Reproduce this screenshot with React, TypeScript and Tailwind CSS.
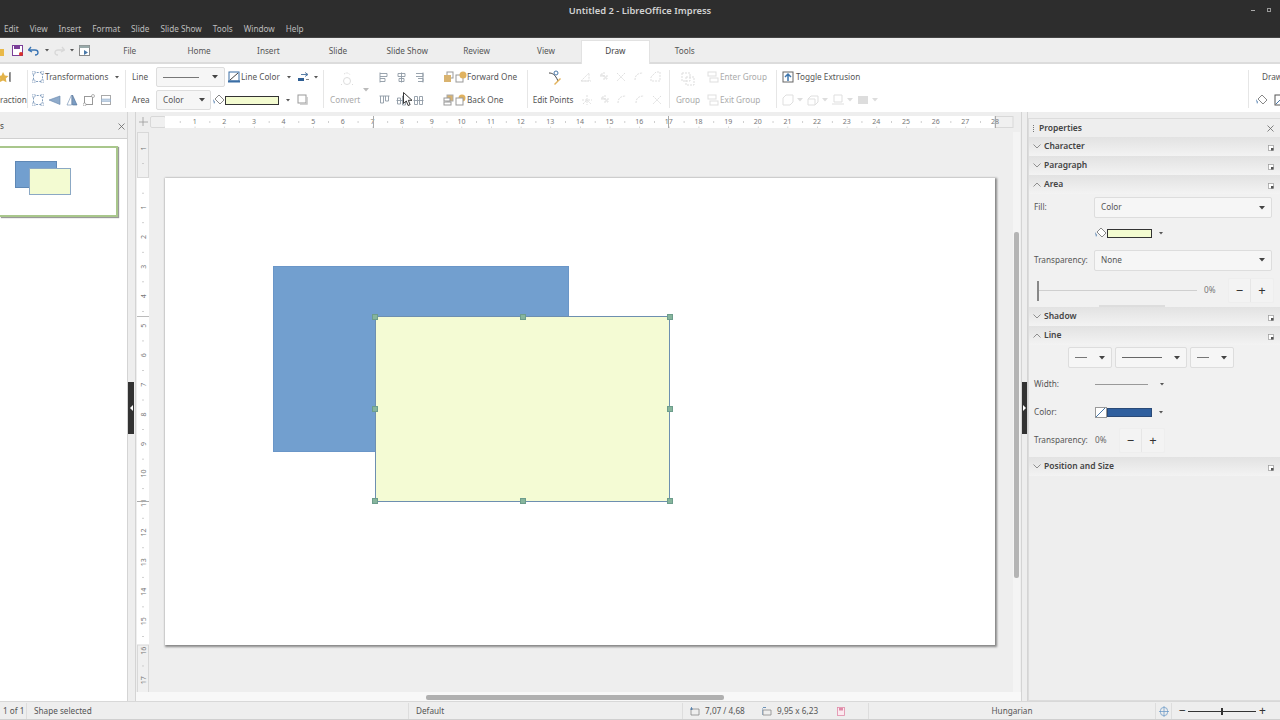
import React from "react";

const G = "#8f9aa5";
const L = "#dfdfdf";

function Ic({ w = 12, h = 12, children }: { w?: number; h?: number; children?: React.ReactNode }) {
  return (
    <svg width={w} height={h} viewBox={`0 0 ${w} ${h}`} fill="none" className="shrink-0 block">
      {children}
    </svg>
  );
}

function Arrow({ color = "#444" }: { color?: string }) {
  return (
    <svg width="6" height="4" viewBox="0 0 6 4" className="shrink-0 block">
      <path d="M0 0h6L3 3.500z" fill={color} />
    </svg>
  );
}

function Tiny() {
  return (
    <svg width="4" height="3" viewBox="0 0 4 3" className="shrink-0 block">
      <path d="M0 0h4L2 2.500z" fill="#555" />
    </svg>
  );
}

function Sep() {
  return <div className="w-px h-[38px] self-center bg-[#e6e6e6] shrink-0" />;
}

function AlignIc({ v = 0 }: { v?: number }) {
  const paths = [
    "M1 .5v10M1 1.500h7v3H1M1 6.500h5v3H1",
    "M5.500 .5v10M2 1.500h7v3H2zM3 6.500h5v3H3z",
    "M10 .5v10M3 1.500h7v3H3M5 6.500h5v3H5",
    "M.5 1h10M1.500 1v7h3V1M6.500 1v5h3V1",
    "M.5 5.500h10M1.500 3v6h3V3zM6.500 1v9h3V1z",
    "M.5 5.500h10M1.500 1.500v8h3v-8zM6.500 1.500v8h3v-8z",
  ];
  return (
    <Ic w={11} h={11}>
      <path d={paths[v]} stroke={G} strokeWidth="0.9" />
    </Ic>
  );
}

function ShapeIc({ kind }: { kind: number }) {
  if (kind === 0)
    return (
      <Ic>
        <rect x="1.500" y="1.500" width="9" height="9" stroke="#7f9cbd" strokeDasharray="2 1.200" />
        <path d="M0 0h3v3H0zM9 0h3v3H9zM0 9h3v3H0zM9 9h3v3H9z" fill="#fff" stroke="#7f9cbd" strokeWidth=".6" />
      </Ic>
    );
  if (kind === 1)
    return (
      <Ic>
        <path d="M0 6l11-4v8.500z" fill="#8fabcb" stroke="#6787ad" strokeWidth=".6" />
      </Ic>
    );
  if (kind === 2)
    return (
      <Ic>
        <path d="M5.500 1v10H1z" fill="#fff" stroke="#6787ad" strokeWidth=".6" />
        <path d="M6.500 1v10H11z" fill="#7a9cc4" stroke="#4c6c92" strokeWidth=".6" />
      </Ic>
    );
  if (kind === 3)
    return (
      <Ic>
        <rect x="1.500" y="2.500" width="8" height="8" stroke="#999" />
        <circle cx="10" cy="2" r="1.500" fill="#fff" stroke="#888" strokeWidth=".6" />
        <circle cx="1.500" cy="10.500" r="1.500" fill="#fff" stroke="#888" strokeWidth=".6" />
      </Ic>
    );
  return (
    <Ic>
      <rect x="1.500" y="1.500" width="9" height="9" stroke="#a9a9a9" />
      <path d="M1.500 5h9v2.500h-9z" fill="#c2d3e5" stroke="#8ba6c4" strokeWidth=".5" />
    </Ic>
  );
}

function Dis({ v = 0 }: { v?: number }) {
  const d = [
    "M1 10L9 2v8zM1 10h10",
    "M2 5h8M6 1v9M3 3h2v2H3zM7 6h2v2H7z",
    "M2 2l8 8M10 2l-8 8",
    "M2 9C2 4 5 2 10 2",
    "M1 10V6l5-5h4v9z",
    "M6 1v10M1 6h10M2 10l4-4 4 4",
  ];
  return (
    <Ic>
      <path d={d[v]} stroke={L} strokeWidth="1" strokeDasharray="2 1" />
    </Ic>
  );
}

function Chevron({ up }: { up?: boolean }) {
  return (
    <svg width="8" height="5" viewBox="0 0 8 5" className="shrink-0 block">
      <path d={up ? "M.5 4.500L4 1l3.500 3.500" : "M.5 .5L4 4l3.500-3.500"} stroke="#777" fill="none" strokeWidth=".8" />
    </svg>
  );
}

function More() {
  return (
    <svg width="6" height="6" viewBox="0 0 6 6" className="block shrink-0">
      <rect x=".5" y=".5" width="5" height="5" fill="#fff" stroke="#999" strokeWidth=".7" />
      <rect x="3" y="3" width="2.500" height="2.500" fill="#555" />
    </svg>
  );
}

function Close() {
  return (
    <svg width="7" height="7" viewBox="0 0 7 7" className="block shrink-0">
      <path d="M.5.5l6 6M6.500.5l-6 6" stroke="#666" strokeWidth=".8" />
    </svg>
  );
}

function SectionHead({ title, up }: { title: string; up?: boolean }) {
  return (
    <div className="h-[19px] flex items-center bg-gradient-to-b from-[#e2e2e2] to-[#f3f3f3] pl-[4px] pr-[6px] shrink-0">
      <Chevron up={up} />
      <span className="ml-[3px] text-[8.500px] font-semibold text-[#444] flex-1">{title}</span>
      <div className="mt-[3px]">
        <More />
      </div>
    </div>
  );
}

function SelectBox({ children, cls }: { children?: React.ReactNode; cls: string }) {
  return (
    <div className={`flex items-center justify-between border border-[#dddddd] rounded-[2px] bg-[#f6f6f6] shrink-0 ${cls}`}>
      {children}
    </div>
  );
}

function StepBtns() {
  return (
    <div className="flex h-[25px] border border-[#eeeeee] rounded-[2px] shrink-0 bg-[#f3f3f3]">
      <div className="w-[22px] flex items-center justify-center border-r border-[#e6e6e6] text-[13px] leading-none text-[#333]">−</div>
      <div className="w-[22px] flex items-center justify-center text-[13px] leading-none text-[#333]">+</div>
    </div>
  );
}

function HRuler() {
  const n = Array.from({ length: 28 }, (_, i) => i + 1);
  const x0 = 29.64;
  const off = 166 - 136;
  return (
    <svg width="885" height="12" viewBox="0 0 885 12" className="block">
      <path d="M4 6h9M8 1v9" stroke="#999" strokeWidth=".8" />
      <rect x="15.500" y=".5" width="15" height="11" rx="1.500" fill="#f0f0f0" stroke="#d8d8d8" />
      <rect x={off} y="0" width="830" height="12" fill="#fff" />
      <rect x={off + 830} y=".5" width="18" height="11" fill="#f0f0f0" stroke="#d8d8d8" />
      {n.map((i) => (
        <g key={i}>
          <text x={off + i * x0} y="8" textAnchor="middle" fontSize="7" fill="#777" fontFamily="Noto Sans, sans-serif">
            {i}
          </text>
          <rect x={off + (i - 0.5) * x0} y="5" width=".8" height="2" fill="#c4c4c4" />
          <rect x={off + i * x0} y="10.500" width=".8" height="1.500" fill="#d0d0d0" />
        </g>
      ))}
      <rect x="238" y="0" width="1" height="12" fill="#aaa" />
      <rect x="533" y="0" width="1" height="12" fill="#aaa" />
      <rect x={off + 830} y="0" width="1" height="12" fill="#aaa" />
    </svg>
  );
}

function VRuler() {
  const n = Array.from({ length: 17 }, (_, i) => i + 1);
  const step = 29.55;
  const top = 46;
  return (
    <svg width="14" height="561" viewBox="0 0 14 561" className="block shrink-0">
      <rect x="2.500" y=".5" width="11" height="45" fill="#f0f0f0" stroke="#d8d8d8" />
      <rect x="2" y={top} width="12" height="467" fill="#fff" />
      <rect x="2.500" y={top + 467} width="11" height="48" fill="#f0f0f0" stroke="#d8d8d8" />
      <text transform={`translate(11 ${top - step}) rotate(-90)`} textAnchor="middle" fontSize="7" fill="#777" fontFamily="Noto Sans, sans-serif">1</text>
      <rect x="7" y={top - step / 2} width="2" height=".8" fill="#c4c4c4" />
      {n.map((i) => (
        <g key={i}>
          <text transform={`translate(11 ${top + i * step}) rotate(-90)`} textAnchor="middle" fontSize="7" fill="#777" fontFamily="Noto Sans, sans-serif">
            {i}
          </text>
          <rect x="7" y={top + (i - 0.5) * step} width="2" height=".8" fill="#c4c4c4" />
        </g>
      ))}
      <rect x="2" y="184" width="12" height="1" fill="#bbb" />
      <rect x="2" y="369" width="12" height="1" fill="#aaa" />
    </svg>
  );
}

function Handle({ cls }: { cls: string }) {
  return <div className={`absolute w-[6px] h-[6px] bg-[#86b59c] border border-[#6d9d8c] ${cls}`} />;
}

function Toolbar() {
  return (
    <div className="h-[48px] bg-white flex text-[#555] shrink-0 overflow-hidden pt-[1px]">
      <div className="w-[27px] shrink-0 flex flex-col">
        <div className="h-[24px] flex items-center">
          <svg width="11" height="12" viewBox="0 0 11 12" className="block">
            <path d="M3 1l1.800 3.500 3.700.5-2.700 2.600.7 3.700L3 9.500-.5 11.300l.7-3.700L-2 5l3.500-.5z" fill="#e3b34a" />
            <path d="M9.500 1.500h1v9h-1" stroke="#999" />
          </svg>
        </div>
        <div className="h-[22px] flex items-center">
          <span className="whitespace-nowrap">raction</span>
        </div>
      </div>
      <Sep />
      <div className="w-[97px] shrink-0 flex flex-col pl-[4px]">
        <div className="h-[24px] flex items-center">
          <ShapeIc kind={0} />
          <span className="ml-[1px]">Transformations</span>
          <div className="ml-[7px]"><Tiny /></div>
        </div>
        <div className="h-[22px] flex items-center gap-[5px]">
          <ShapeIc kind={0} />
          <ShapeIc kind={1} />
          <ShapeIc kind={2} />
          <ShapeIc kind={3} />
          <ShapeIc kind={4} />
        </div>
      </div>
      <Sep />
      <div className="w-[197px] shrink-0 flex flex-col pl-[6px]">
        <div className="h-[24px] flex items-center">
          <span className="w-[24px]">Line</span>
          <SelectBox cls="w-[69px] h-[20px] px-[6px]">
            <div className="w-[36px] h-px bg-[#777]" />
            <Arrow />
          </SelectBox>
          <div className="ml-[3px]">
            <Ic>
              <rect x="1" y="1" width="10" height="9" fill="#fff" stroke="#3b6ea5" />
              <path d="M2 9L10 2" stroke="#444" />
              <rect x="0" y="9.500" width="12" height="2" fill="#3b6ea5" />
            </Ic>
          </div>
          <span className="ml-[1px]">Line Color</span>
          <div className="ml-[7px]"><Tiny /></div>
          <div className="ml-[7px]">
            <Ic>
              <path d="M3 3.500h7M7 1.500l3 2-3 2" stroke="#5a7fa8" />
              <path d="M0 8.500h6" stroke="#2f5f94" strokeWidth="3" />
              <path d="M8 8.500h3" stroke="#888" />
            </Ic>
          </div>
          <div className="ml-[4px]"><Tiny /></div>
        </div>
        <div className="h-[22px] flex items-center">
          <span className="w-[24px]">Area</span>
          <SelectBox cls="w-[55px] h-[20px] pl-[6px] pr-[5px]">
            <span>Color</span>
            <Arrow />
          </SelectBox>
          <div className="ml-[2px]">
            <Ic>
              <path d="M6 1l5 5-4 4-5-5z" fill="#fff" stroke="#888" />
              <path d="M0 5l2 3-1 2z" fill="#5c86b4" />
            </Ic>
          </div>
          <div className="w-[54px] h-[9px] bg-[#f3fbd0] border border-[#333] shrink-0" />
          <div className="ml-[7px]"><Tiny /></div>
          <div className="ml-[7px]">
            <Ic>
              <rect x="1" y="1" width="8" height="8" fill="#fff" stroke="#999" />
              <path d="M10 3v7H3" stroke="#c4c4c4" strokeWidth="1.500" />
            </Ic>
          </div>
        </div>
      </div>
      <Sep />
      <div className="w-[48px] shrink-0 flex flex-col text-[#aaa] relative pl-[6px]">
        <div className="h-[24px] flex items-center pl-[9px] pt-[4px]">
          <Ic w={16} h={18}>
            <circle cx="8" cy="11" r="3.500" stroke="#ddd" />
            <path d="M5 4c3-2 5-1 6 1M2 14l1 1M13 14l1 1" stroke="#ddd" strokeDasharray="1.500 1" />
          </Ic>
        </div>
        <div className="h-[22px] flex items-center"><span>Convert</span></div>
        <div className="absolute left-[39px] top-[23px]"><Arrow color="#bbb" /></div>
      </div>
      <div className="w-[60px] shrink-0 flex flex-col pl-[7px]">
        <div className="h-[24px] flex items-center gap-[6px]">
          <AlignIc v={0} />
          <AlignIc v={1} />
          <AlignIc v={2} />
        </div>
        <div className="h-[22px] flex items-center gap-[6px]">
          <AlignIc v={3} />
          <AlignIc v={4} />
          <AlignIc v={5} />
        </div>
      </div>
      <div className="w-[95px] shrink-0 flex flex-col pl-[11px]">
        <div className="h-[24px] flex items-center">
          <Ic>
            <rect x="4" y="1" width="6" height="6" fill="#fff" stroke="#999" />
            <rect x="1" y="4" width="7" height="7" fill="#d9b36f" />
          </Ic>
          <Ic>
            <rect x="1" y="4" width="7" height="7" fill="#fff" stroke="#999" />
            <circle cx="8" cy="4" r="3.500" fill="#e0b25f" />
          </Ic>
          <span>Forward One</span>
        </div>
        <div className="h-[22px] flex items-center">
          <Ic>
            <rect x="4" y="1" width="6" height="6" fill="#d9b36f" stroke="#aaa" />
            <rect x="1" y="4" width="6" height="3" fill="#fff" stroke="#999" />
            <rect x="1" y="8" width="7" height="3" fill="#fff" stroke="#999" />
          </Ic>
          <Ic>
            <circle cx="7" cy="4" r="3.500" fill="#e0b25f" />
            <rect x="1" y="4" width="7" height="7" fill="#fff" stroke="#999" />
          </Ic>
          <span>Back One</span>
        </div>
      </div>
      <Sep />
      <div className="w-[50px] shrink-0 flex flex-col items-center">
        <div className="h-[24px] flex items-center pt-[2px] pl-[3px]">
          <Ic w={16} h={16}>
            <path d="M2 3c3 0 6 1 9 8" stroke="#444" />
            <circle cx="9" cy="3" r="2" stroke="#4a78a8" />
            <path d="M7 14l6-6 1 1-6 6z" fill="#e3b35c" />
          </Ic>
        </div>
        <div className="h-[22px] flex items-center whitespace-nowrap"><span>Edit Points</span></div>
      </div>
      <div className="w-[91px] shrink-0 flex flex-col">
        <div className="h-[24px] flex items-center gap-[5.500px] pl-[2px]">
          <Dis v={0} />
          <Dis v={1} />
          <Dis v={2} />
          <Dis v={3} />
          <Dis v={4} />
        </div>
        <div className="h-[22px] flex items-center gap-[5.500px] pl-[3px]">
          <Dis v={5} />
          <Dis v={1} />
          <Dis v={3} />
          <Dis v={3} />
          <Dis v={2} />
        </div>
      </div>
      <Sep />
      <div className="w-[106px] shrink-0 flex text-[#aaa]">
        <div className="w-[36px] shrink-0 flex flex-col items-center">
          <div className="h-[24px] flex items-center pt-[4px]">
            <Ic w={14} h={14}>
              <rect x="1" y="1" width="8" height="8" stroke="#ddd" strokeDasharray="2 1" />
              <rect x="5" y="5" width="8" height="8" stroke="#ddd" strokeDasharray="2 1" />
            </Ic>
          </div>
          <div className="h-[22px] flex items-center"><span>Group</span></div>
        </div>
        <div className="flex flex-col pl-[1px]">
          <div className="h-[24px] flex items-center">
            <Ic>
              <rect x="1" y="1" width="8" height="4" stroke={L} />
              <rect x="3" y="7" width="8" height="4" stroke={L} />
            </Ic>
            <span className="ml-[1px] whitespace-nowrap">Enter Group</span>
          </div>
          <div className="h-[22px] flex items-center">
            <Ic>
              <rect x="1" y="1" width="8" height="4" stroke={L} />
              <rect x="3" y="7" width="8" height="4" stroke={L} />
            </Ic>
            <span className="ml-[1px] whitespace-nowrap">Exit Group</span>
          </div>
        </div>
      </div>
      <Sep />
      <div className="w-[471px] shrink-0 flex flex-col pl-[5px]">
        <div className="h-[24px] flex items-center">
          <Ic>
            <rect x="1" y="1" width="10" height="10" fill="#fff" stroke="#666" />
            <path d="M6 10V3M3 6l3-3 3 3" stroke="#3d75ad" strokeWidth="1.500" />
          </Ic>
          <span className="ml-[2px]">Toggle Extrusion</span>
        </div>
        <div className="h-[22px] flex items-center">
          <Ic>
            <path d="M1 4l3-3h7v7l-3 3H1z" stroke={L} />
          </Ic>
          <div className="ml-[3px] mr-[4px]"><Arrow color="#ddd" /></div>
          <Ic>
            <path d="M1 5h7v6H1zM1 5l3-3h7v6l-3 3" stroke={L} />
          </Ic>
          <div className="ml-[3px] mr-[4px]"><Arrow color="#ddd" /></div>
          <Ic>
            <path d="M2 1h8v7H2zM0 10h12" stroke={L} />
          </Ic>
          <div className="ml-[3px] mr-[4px]"><Arrow color="#ddd" /></div>
          <Ic>
            <rect x="1" y="2" width="10" height="8" fill="#ddd" />
          </Ic>
          <div className="ml-[3px]"><Arrow color="#ddd" /></div>
        </div>
      </div>
      <Sep />
      <div className="flex-1 flex flex-col pl-[13px]">
        <div className="h-[24px] flex items-center whitespace-nowrap">Draw</div>
        <div className="h-[22px] flex items-center -ml-[6px] gap-[6px]">
          <Ic>
            <path d="M6 1l5 5-4 4-5-5z" fill="#fff" stroke="#888" />
            <path d="M0 5l2 3-1 2z" fill="#5c86b4" />
          </Ic>
          <Ic>
            <rect x="1" y="1" width="10" height="10" fill="#fff" stroke="#555" />
            <path d="M2 10l8-8" stroke="#4a78a8" />
          </Ic>
        </div>
      </div>
    </div>
  );
}

export default function App() {
  const tabs = ["File", "Home", "Insert", "Slide", "Slide Show", "Review", "View", "Draw", "Tools"];
  const menu = ["Edit", "View", "Insert", "Format", "Slide", "Slide Show", "Tools", "Window", "Help"];
  return (
    <div className="relative w-[1280px] h-[720px] flex flex-col overflow-hidden bg-[#eeeeee] font-['Noto_Sans','Open_Sans',sans-serif] text-[8.200px] text-[#555]">
      {/* Title + menu */}
      <div className="h-[38px] bg-[#2d2d2d] flex flex-col shrink-0 border-b border-[#444] pt-[1px]">
        <div className="h-[20px] flex items-center relative">
          <div className="flex-1 text-center text-[9.400px] font-semibold text-[#d2d2d2]">Untitled 2 - LibreOffice Impress</div>
          <div className="absolute right-[25px] top-[9px] w-[4px] h-px bg-[#aaa]" />
          <div className="absolute right-[9px] top-[7px] w-[4px] h-[4px] border border-[#999]" />
        </div>
        <div className="h-[16px] flex items-center pl-[4px] gap-[11px] text-[#bdbdbd]">
          {menu.map((m, i) => (
            <span key={i}>{m}</span>
          ))}
        </div>
      </div>
      {/* Tabs */}
      <div className="h-[26px] bg-[#eeeeee] border-b-[2px] border-[#dcdcdc] flex shrink-0">
        <div className="w-[102px] shrink-0 flex items-center -ml-[7px] pt-[1px]">
          <Ic>
            <path d="M0 3h4l1 1h6v7H0z" fill="#e9b949" />
          </Ic>
          <div className="ml-[7px]">
            <Ic w={11} h={11}>
              <rect x=".5" y=".5" width="10" height="10" fill="#fff" stroke="#7b3f98" />
              <rect x="2" y=".5" width="6" height="3.500" fill="#7b3f98" />
              <circle cx="9" cy="9" r="2" fill="#d8322a" />
            </Ic>
          </div>
          <div className="ml-[5px]">
            <Ic>
              <path d="M3 2L.5 5 4 7M1 5h6c4 0 4 5 0 5" stroke="#3a74b3" strokeWidth="1.300" />
            </Ic>
          </div>
          <div className="ml-[5px]"><Tiny /></div>
          <div className="ml-[4px]">
            <Ic>
              <path d="M9 2l2.500 3L8 7M11 5H5c-4 0-4 5 0 5" stroke="#d8d8d8" strokeWidth="1.300" />
            </Ic>
          </div>
          <div className="ml-[5px]"><Tiny /></div>
          <div className="ml-[5px]">
            <Ic>
              <rect x=".5" y=".5" width="10" height="10" fill="#fff" stroke="#888" />
              <rect x=".5" y=".5" width="10" height="2.500" fill="#9aa" />
              <path d="M5 5l4 2.500L5 10z" fill="#4a78a8" />
            </Ic>
          </div>
        </div>
        {tabs.map((t) => (
          <div
            key={t}
            className={
              t === "Draw"
                ? "w-[69.400px] shrink-0 flex items-center justify-center bg-white border-t border-x border-[#e2e2e2] mt-[2px] -mb-[2px] pb-[2px] text-[#444]"
                : "w-[69.400px] shrink-0 flex items-center justify-center pt-[2px] text-[#555]"
            }
          >
            {t}
          </div>
        ))}
      </div>
      <Toolbar />
      {/* Main */}
      <div className="flex-1 flex min-h-0 border-b border-[#d8d8d8]">
        {/* Slide panel */}
        <div className="w-[127px] shrink-0 flex flex-col">
          <div className="h-[27px] flex items-center justify-between pr-[2px] pt-[2px] border-b border-[#d0d0d0] bg-[#eeeeee] shrink-0">
            <span className="text-[#444]">s</span>
            <Close />
          </div>
          <div className="flex-1 bg-white pt-[7px]">
            <div className="w-[118px] h-[71px] border-[2px] border-l-0 border-[#a9c78c] bg-white pl-[15px] pt-[13px] shadow-[1px_1px_1px_#999]">
              <div className="relative w-[57px] h-[35px]">
                <div className="absolute left-0 top-0 w-[42px] h-[27px] bg-[#729fcf] border border-[#5f88b5]" />
                <div className="absolute left-[14px] top-[7px] w-[42px] h-[27px] bg-[#f3fbd2] border border-[#8ba8c4]" />
              </div>
            </div>
          </div>
        </div>
        {/* Left splitter */}
        <div className="w-[9px] shrink-0 flex items-center border-l border-r border-[#d4d4d4] bg-[#eeeeee]">
          <div className="w-[6px] h-[52px] bg-[#333] flex items-center justify-center mt-[2px]">
            <div className="w-0 h-0 border-y-[3px] border-y-transparent border-r-[3px] border-r-white" />
          </div>
        </div>
        {/* Center */}
        <div className="w-[885px] shrink-0 flex flex-col">
          <div className="pt-[4px] pb-[4px] h-[20px] shrink-0 -ml-[1px]">
            <HRuler />
          </div>
          <div className="flex-1 flex min-h-0 -ml-[1px]">
            <VRuler />
            <div className="w-[864px] shrink-0 pt-[46px] pl-[16px]">
              <div className="relative w-[830px] h-[467px] bg-white shadow-[1px_1px_2px_1px_#888]">
                <div className="absolute left-[108px] top-[88px] w-[296px] h-[186px] bg-[#729fcf] border border-[#6a96c8]" />
                <div className="absolute left-[210px] top-[138px] w-[295px] h-[186px] bg-[#f4fbd4] border border-[#6d8fb0]" />
                <Handle cls="left-[207px] top-[136px]" />
                <Handle cls="left-[355px] top-[136px]" />
                <Handle cls="left-[502px] top-[136px]" />
                <Handle cls="left-[207px] top-[228px]" />
                <Handle cls="left-[502px] top-[228px]" />
                <Handle cls="left-[207px] top-[320px]" />
                <Handle cls="left-[355px] top-[320px]" />
                <Handle cls="left-[502px] top-[320px]" />
              </div>
            </div>
            <div className="w-[7px] shrink-0 pt-[100px] bg-[#f4f4f4] pl-px">
              <div className="w-[5px] h-[346px] bg-[#b4b4b4] rounded-[2px]" />
            </div>
          </div>
          <div className="h-[9px] shrink-0 bg-[#f8f8f8] pl-[290px] pt-[3px]">
            <div className="w-[298px] h-[5px] bg-[#b0b0b0] rounded-[2px]" />
          </div>
        </div>
        {/* Right splitter */}
        <div className="w-[7px] shrink-0 flex items-center border-l border-r border-[#d4d4d4] bg-[#eeeeee]">
          <div className="w-[5px] h-[52px] bg-[#333] flex items-center justify-center mt-[2px]">
            <div className="w-0 h-0 border-y-[3px] border-y-transparent border-l-[3px] border-l-white" />
          </div>
        </div>
        {/* Sidebar */}
        <div className="flex-1 flex flex-col pt-[6px]">
          <div className="flex-1 border border-[#dcdcdc] border-r-0 flex flex-col">
            <div className="h-[18px] flex items-center pl-[4px] pr-[6px] bg-[#eeeeee] shrink-0">
              <div className="flex flex-col gap-[1px] mr-[5px]">
                <div className="w-px h-px bg-[#777]" />
                <div className="w-px h-px bg-[#777]" />
                <div className="w-px h-px bg-[#777]" />
                <div className="w-px h-px bg-[#777]" />
              </div>
              <span className="text-[8.500px] font-semibold text-[#444] flex-1">Properties</span>
              <Close />
            </div>
            <SectionHead title="Character" />
            <SectionHead title="Paragraph" />
            <SectionHead title="Area" up />
            <div className="h-[113px] bg-[#f1f1f1] shrink-0 overflow-hidden relative">
              <div className="h-[3px]" />
              <div className="h-[21px] flex items-center pl-[5px]">
                <span className="w-[60px] shrink-0">Fill:</span>
                <SelectBox cls="w-[178px] h-[21px] pl-[6px] pr-[6px]">
                  <span>Color</span>
                  <Arrow />
                </SelectBox>
              </div>
              <div className="h-[30px] flex items-center pl-[66px]">
                <Ic>
                  <path d="M6 1l5 5-4 4-5-5z" fill="#fff" stroke="#888" />
                  <path d="M0 5l2 3-1 2z" fill="#5c86b4" />
                </Ic>
                <div className="w-[45px] h-[9px] bg-[#f3fbd0] border border-[#333] shrink-0" />
                <div className="ml-[7px]"><Tiny /></div>
              </div>
              <div className="h-[22px] flex items-center pl-[5px] mt-[1px]">
                <span className="w-[60px] shrink-0">Transparency:</span>
                <SelectBox cls="w-[178px] h-[21px] pl-[6px] pr-[6px]">
                  <span>None</span>
                  <Arrow />
                </SelectBox>
              </div>
              <div className="h-[31px] flex items-center pl-[8px] mt-[4px]">
                <div className="w-[2px] h-[20px] bg-[#888] shrink-0" />
                <div className="w-[158px] h-px bg-[#cfcfcf] shrink-0" />
                <span className="ml-[7px] w-[24px] shrink-0 text-[#777]">0%</span>
                <StepBtns />
              </div>
              <div className="absolute left-[70px] bottom-0 w-[66px] h-[2px] bg-[#dddddd]" />
            </div>
            <SectionHead title="Shadow" />
            <SectionHead title="Line" up />
            <div className="h-[112px] bg-[#f1f1f1] shrink-0 flex flex-col">
              <div className="h-[27px] flex items-start pt-[2px] pl-[39px] gap-[3px]">
                <SelectBox cls="w-[44px] h-[21px] px-[6px]">
                  <div className="w-[12px] h-px bg-[#777]" />
                  <Arrow />
                </SelectBox>
                <SelectBox cls="w-[72px] h-[21px] px-[6px]">
                  <div className="w-[40px] h-px bg-[#666]" />
                  <Arrow />
                </SelectBox>
                <SelectBox cls="w-[44px] h-[21px] px-[6px]">
                  <div className="w-[12px] h-px bg-[#777]" />
                  <Arrow />
                </SelectBox>
              </div>
              <div className="h-[25px] flex items-center pl-[5px]">
                <span className="w-[61px] shrink-0">Width:</span>
                <div className="w-[53px] h-px bg-[#999] shrink-0" />
                <div className="ml-[12px]"><Tiny /></div>
              </div>
              <div className="h-[31px] flex items-center pl-[5px]">
                <span className="w-[61px] shrink-0">Color:</span>
                <Ic>
                  <rect x=".5" y=".5" width="11" height="10" fill="#fff" stroke="#999" />
                  <path d="M1 10l9-9" stroke="#4a78a8" />
                </Ic>
                <div className="w-[45px] h-[9px] bg-[#2f5f9e] border border-[#2a4a78] shrink-0" />
                <div className="ml-[7px]"><Tiny /></div>
              </div>
              <div className="h-[25px] flex items-center pl-[5px]">
                <span className="w-[61px] shrink-0">Transparency:</span>
                <span className="w-[24px] shrink-0 text-[#666]">0%</span>
                <StepBtns />
              </div>
            </div>
            <SectionHead title="Position and Size" />
            <div className="flex-1 bg-[#eeeeee]" />
          </div>
        </div>
      </div>
      {/* Status bar */}
      <div className="h-[18px] shrink-0 flex items-center bg-[#eeeeee] border-b border-[#cfcfcf] text-[#555] pt-[1px]">
        <div className="w-[27px] shrink-0 h-full flex items-center pl-[3px] border-r border-[#dddddd] whitespace-nowrap">1 of 1</div>
        <div className="w-[382px] shrink-0 h-full flex items-center pl-[7px] border-r border-[#dddddd]">Shape selected</div>
        <div className="w-[274px] shrink-0 h-full flex items-center pl-[7px] border-r border-[#dddddd]">Default</div>
        <div className="w-[70px] shrink-0 h-full flex items-center pl-[7px]">
          <Ic w={10} h={9}>
            <path d="M1 2h8v6H1z" stroke="#888" strokeWidth=".8" />
            <path d="M0 2h3M1.500 0v3" stroke="#4a78a8" strokeWidth=".8" />
          </Ic>
          <span className="ml-[5px] whitespace-nowrap">7,07 / 4,68</span>
        </div>
        <div className="w-[72px] shrink-0 h-full flex items-center pl-[9px]">
          <Ic w={10} h={9}>
            <path d="M1 3h8v5H1z" stroke="#888" strokeWidth=".8" />
            <path d="M1 .5h3M0 1v7" stroke="#4a78a8" strokeWidth=".8" />
          </Ic>
          <span className="ml-[5px] whitespace-nowrap">9,95 x 6,23</span>
        </div>
        <div className="w-[44px] shrink-0 h-full flex items-center pl-[12px] border-r border-[#dddddd]">
          <Ic w={8} h={9}>
            <rect x=".5" y=".5" width="7" height="8" fill="#fbe9ef" stroke="#e08aa8" strokeWidth=".8" />
            <rect x="2" y="1" width="4" height="2.500" fill="#e08aa8" />
          </Ic>
        </div>
        <div className="w-[287px] shrink-0 h-full flex items-center justify-center border-r border-[#dddddd]">Hungarian</div>
        <div className="w-[16px] shrink-0 h-full flex items-center justify-center border-r border-[#dddddd]">
          <Ic w={10} h={11}>
            <rect x="1.500" y="1.500" width="7" height="8" rx="3" stroke="#6f9cc8" strokeWidth=".8" />
            <path d="M5 0v11M0 5.500h10" stroke="#6f9cc8" strokeWidth=".8" />
          </Ic>
        </div>
        <div className="flex-1 h-full flex items-center pl-[7px] text-[#333]">
          <span className="text-[12px] leading-none">−</span>
          <div className="w-[68px] h-px bg-[#333] ml-[2px] mr-[3px] flex justify-center items-center">
            <div className="w-[2px] h-[7px] bg-[#333]" />
          </div>
          <span className="text-[12px] leading-none">+</span>
        </div>
      </div>
      {/* Mouse pointer over the toolbar */}
      <svg width="10" height="15" viewBox="0 0 10 15" className="absolute left-[403px] top-[92px]">
        <path d="M.5.5v11l2.800-2.500 1.800 4.500 2-.8-1.800-4.400h3.700z" fill="#fff" stroke="#222" strokeWidth=".9" />
      </svg>
    </div>
  );
}
